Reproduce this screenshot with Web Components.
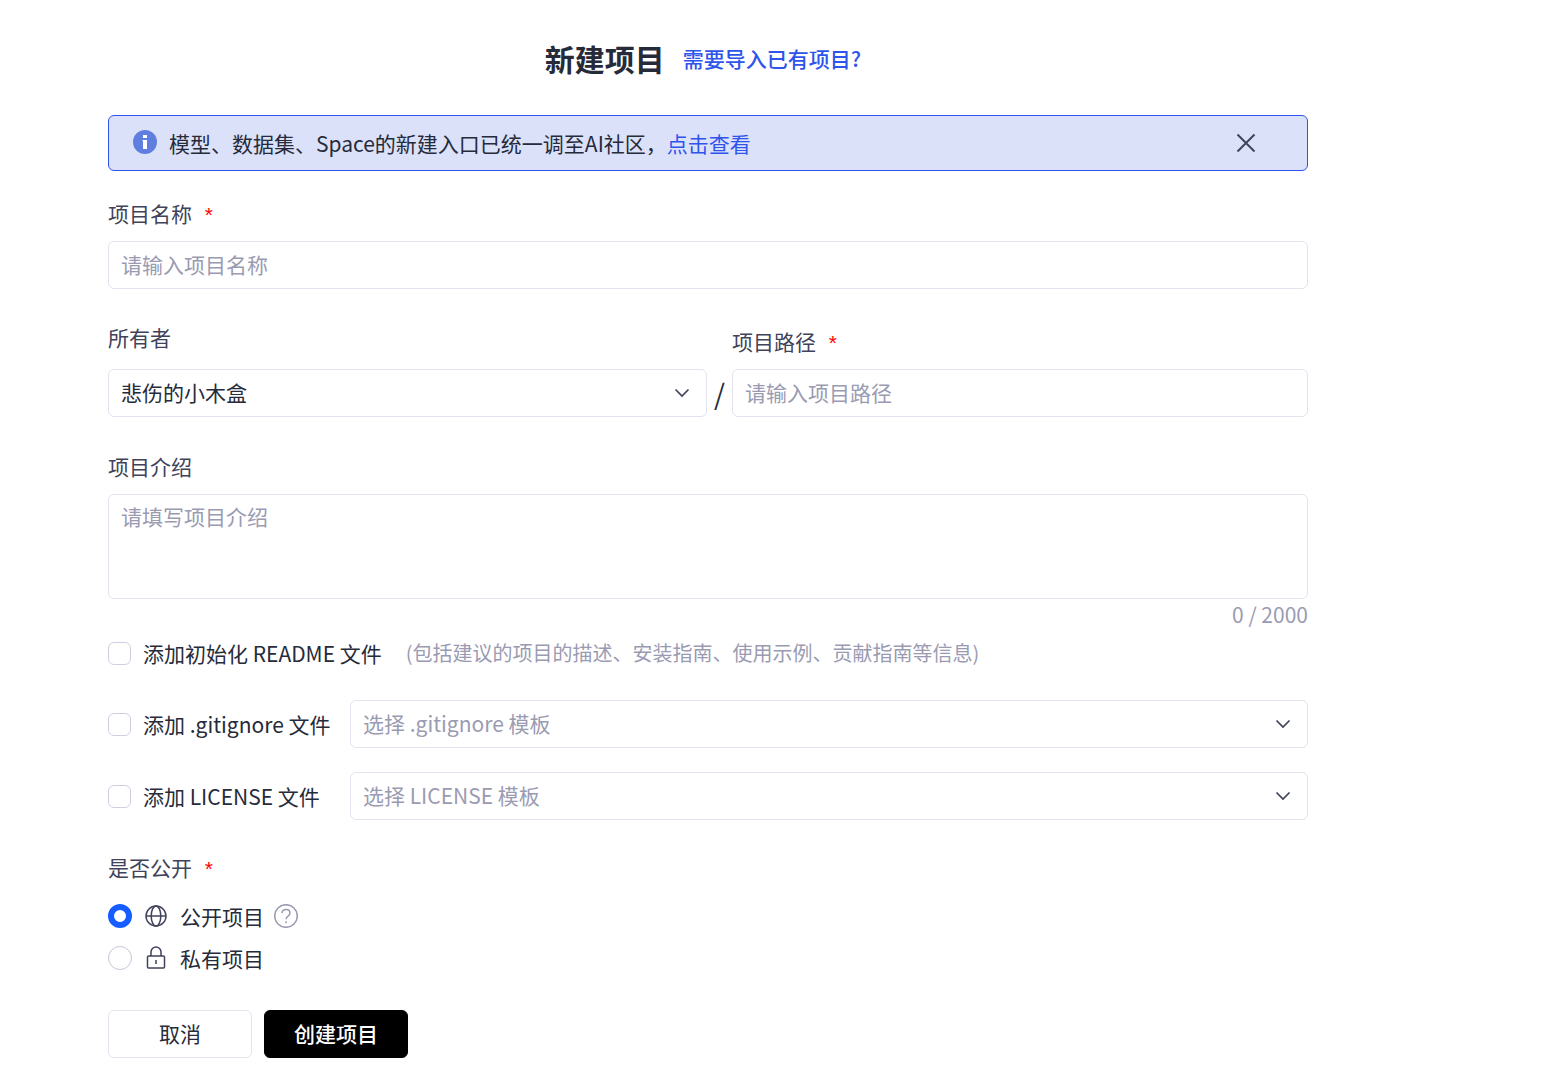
<!DOCTYPE html>
<html lang="zh-CN">
<head>
<meta charset="utf-8">
<meta name="viewport" content="width=device-width, initial-scale=1">
<title>新建项目</title>
<style>
	body {
		margin: 0;
		background: #fff;
		color: #262b3a;
		font: 21px/32px "Noto Sans CJK SC", sans-serif;
		--line: #e3e3ee;
		--label: #40435a;
		--muted: #9a9bb2;
		--link: #2f54eb;
		--dark: #40435a;
	}
</style>
</head>
<body>

<project-page>
	<page-title slot="title">新建项目<a slot="link" href="#import">需要导入已有项目?</a></page-title>
	<notice-bar slot="notice">模型、数据集、Space的新建入口已统一调至AI社区，<a href="#community">点击查看</a></notice-bar>

	<text-field placeholder="请输入项目名称" required>项目名称</text-field>
	<path-row>
		<select-field slot="owner" value="悲伤的小木盒">所有者</select-field>
		<text-field slot="path" placeholder="请输入项目路径" required>项目路径</text-field>
	</path-row>
	<text-area placeholder="请填写项目介绍" max="2000">项目介绍</text-area>

	<check-row hint="(包括建议的项目的描述、安装指南、使用示例、贡献指南等信息)">添加初始化 README 文件</check-row>
	<check-row class="first-select" options="选择 .gitignore 模板">添加 .gitignore 文件</check-row>
	<check-row class="next-select" options="选择 LICENSE 模板">添加 LICENSE 文件</check-row>

	<visibility-choice>
		是否公开
		<span slot="public">公开项目</span>
		<span slot="private">私有项目</span>
	</visibility-choice>

	<action-button slot="actions">取消</action-button>
	<action-button slot="actions" primary>创建项目</action-button>
</project-page>

<script>
////////////////////////////////////////////////////////////////
//	Shared pieces

const
ICONS = {
	info: `
		<circle cx="12" cy="12" r="12" fill="#5f7ee0"/>
		<rect x="10" y="5" width="4" height="3" fill="#fff"/>
		<path d="M9.500 10H14v9h-4v-8h-.5z" fill="#fff"/>`
,	close: `<path d="M3.500 3.500l17 17M20.500 3.500l-17 17" stroke-width="2"/>`
,	chevron: `<path d="M5.500 8.500l6.500 6.500 6.500-6.500" stroke-width="1.700"/>`
,	globe: `
		<circle cx="12" cy="12" r="10"/>
		<ellipse cx="12" cy="12" rx="4.800" ry="10"/>
		<path d="M2 12h20"/>`
,	lock: `
		<rect x="3.500" y="10" width="17" height="12" rx="1"/>
		<path d="M7 10V6a5 5 0 0 1 10 0v4M12 14v4"/>`
,	help: `
		<circle cx="12" cy="12" r="11.300"/>
		<path d="M8 9.300c0-2.300 1.700-3.900 4-3.900s4 1.500 4 3.500c0 1.500-.8 2.300-2 3.200-1.300.9-1.900 1.600-1.900 3.200"/>
		<path d="M12.100 17.200v2"/>`
}

const
BOX = `
	input, textarea, select {
		box-sizing: border-box;
		width: 100%;
		margin: 0;
		padding: 0 12px 2px;
		border: 1px solid var(--line);
		border-radius: 6px;
		background: #fff;
		color: inherit;
		font: inherit;
		outline: none;
	}
	input, select { height: 48px }
	input::placeholder, textarea::placeholder { color: var(--muted); opacity: 1 }
	input:focus, textarea:focus, select:focus { border-color: var(--link) }
`

const
LABEL = `
	label, .label { color: var(--label); line-height: 30px }
	.star {
		margin-left: 8px;
		color: #f00;
		font-family: "Liberation Sans", sans-serif;
		line-height: 1;
	}
`

const
SELECT = `
	.select { display: grid; align-items: center }
	.select > * { grid-area: 1 / 1 }
	.select select { appearance: none; padding-right: 48px }
	.select ui-icon {
		justify-self: end;
		margin-right: 13px;
		color: var(--dark);
		pointer-events: none;
	}
`

class
Base extends HTMLElement {
	constructor() {
		super()
		this.attachShadow( { mode: 'open' } )
	}
	connectedCallback() {
		this.shadowRoot.innerHTML = this.Render()
		this.Ready()
	}
	Ready() {}
	get Star() {
		return this.hasAttribute( 'required' ) ? '<span class="star" aria-hidden="true">*</span>' : ''
	}
	Attr( name ) {
		return this.getAttribute( name ) ?? ''
	}
}

customElements.define( 'ui-icon', class extends Base {
	Render() {
		return `
			<style>
				:host { display: block; flex: none; width: 24px; height: 24px }
				svg { display: block; width: 100%; height: 100% }
			</style>
			<svg viewBox="0 0 24 24" fill="none" stroke="none" aria-hidden="true">
				<g ${ this.Attr( 'name' ) === 'info' ? '' : 'stroke="currentColor" stroke-width="1.500"' }>
					${ ICONS[ this.Attr( 'name' ) ] }
				</g>
			</svg>
		`
	}
} )

////////////////////////////////////////////////////////////////
//	Header

customElements.define( 'page-title', class extends Base {
	Render() {
		return `
			<style>
				:host { display: flex; justify-content: center; align-items: center; gap: 18px; padding-right: 10px }
				h1 { margin: 0; font-size: 30px; line-height: 48px; font-weight: 700 }
				::slotted( a ) { color: var(--link); font-weight: 500; text-decoration: none }
			</style>
			<h1><slot></slot></h1>
			<slot name="link"></slot>
		`
	}
} )

customElements.define( 'notice-bar', class extends Base {
	Render() {
		return `
			<style>
				:host {
					display: flex;
					align-items: center;
					gap: 12px;
					box-sizing: border-box;
					min-height: 56px;
					padding: 0 49px 0 24px;
					border: 1px solid var(--link);
					border-radius: 6px;
					background: #dce1fa;
				}
				:host( [hidden] ) { display: none }
				p { flex: 1; margin: 0; padding-bottom: 1px }
				::slotted( a ) { color: var(--link); text-decoration: none }
				.info { margin-bottom: 2px }
				button { padding: 0; border: 0; background: none; color: var(--dark); cursor: pointer }
			</style>
			<ui-icon class="info" name="info"></ui-icon>
			<p><slot></slot></p>
			<button type="button" aria-label="关闭"><ui-icon name="close"></ui-icon></button>
		`
	}
	Ready() {
		this.shadowRoot.querySelector( 'button' ).onclick = () => this.hidden = true
	}
} )

////////////////////////////////////////////////////////////////
//	Fields

customElements.define( 'text-field', class extends Base {
	Render() {
		return `
			<style>
				:host { display: flex; flex-direction: column; gap: 13px }
				${ LABEL } ${ BOX }
			</style>
			<label for="control"><slot></slot> ${ this.Star }</label>
			<input id="control" type="text" placeholder="${ this.Attr( 'placeholder' ) }">
		`
	}
} )

customElements.define( 'select-field', class extends Base {
	Render() {
		return `
			<style>
				:host { display: flex; flex-direction: column; gap: 17px }
				${ LABEL } ${ BOX } ${ SELECT }
			</style>
			<label for="control"><slot></slot></label>
			<div class="select">
				<select id="control"><option>${ this.Attr( 'value' ) }</option></select>
				<ui-icon name="chevron"></ui-icon>
			</div>
		`
	}
} )

customElements.define( 'text-area', class extends Base {
	Render() {
		return `
			<style>
				:host { display: flex; flex-direction: column }
				${ LABEL } ${ BOX }
				label { margin-bottom: 13px }
				textarea { display: block; height: 105px; padding: 5px 12px; resize: none }
				output { align-self: flex-end; color: var(--muted); line-height: 30px }
			</style>
			<label for="control"><slot></slot></label>
			<textarea id="control" maxlength="${ this.Attr( 'max' ) }" placeholder="${ this.Attr( 'placeholder' ) }"></textarea>
			<output for="control">0 / ${ this.Attr( 'max' ) }</output>
		`
	}
	Ready() {
		const area = this.shadowRoot.querySelector( 'textarea' )
		const count = this.shadowRoot.querySelector( 'output' )
		area.oninput = () => count.textContent = `${ area.value.length } / ${ this.Attr( 'max' ) }`
	}
} )

customElements.define( 'path-row', class extends Base {
	Render() {
		return `
			<style>
				:host { display: flex; align-items: flex-end }
				.owner { flex: 1; min-width: 0 }
				.path { width: 48% }
				.slash { width: 25px; font-size: 28px; line-height: 48px; text-align: center }
			</style>
			<div class="owner"><slot name="owner"></slot></div>
			<span class="slash">/</span>
			<div class="path"><slot name="path"></slot></div>
		`
	}
} )

customElements.define( 'check-row', class extends Base {
	Render() {
		const hint = this.Attr( 'hint' )
		const options = this.Attr( 'options' )
		return `
			<style>
				:host { display: flex; align-items: center }
				${ BOX } ${ SELECT }
				.check { display: flex; align-items: center; gap: 12px }
				.check.fixed { width: 242px }
				input {
					appearance: none;
					flex: none;
					width: 23px;
					height: 23px;
					padding: 0;
					border-color: #d0cfe2;
				}
				input:checked { border-color: #165dff; background: #165dff }
				.hint { margin-left: 24px; color: var(--muted); font-size: 20px }
				.select { flex: 1 }
				select { color: var(--muted) }
			</style>
			<label class="check ${ options && 'fixed' }"><input type="checkbox"><span><slot></slot></span></label>
			${ hint && `<span class="hint">${ hint }</span>` }
			${ options && `
				<div class="select">
					<select aria-label="${ options }"><option>${ options }</option></select>
					<ui-icon name="chevron"></ui-icon>
				</div>` }
		`
	}
} )

customElements.define( 'visibility-choice', class extends Base {
	Render() {
		return `
			<style>
				:host { display: block }
				${ LABEL }
				.label { margin-bottom: 18px }
				.choices { display: flex; flex-direction: column; gap: 10px }
				.choice { display: flex; align-items: center; gap: 10px }
				.choice label { display: flex; align-items: center; gap: 12px; color: #262b3a; line-height: 32px }
				.choice label ui-icon { color: var(--dark) }
				input {
					appearance: none;
					box-sizing: border-box;
					width: 24px;
					height: 24px;
					margin: 0;
					border: 1px solid #c5c5d8;
					border-radius: 50%;
				}
				input:checked { border: 6px solid #165dff }
				button { padding: 0; border: 0; background: none; color: var(--muted); cursor: pointer }
			</style>
			<div role="radiogroup" aria-labelledby="caption">
				<div class="label" id="caption"><slot></slot> <span class="star" aria-hidden="true">*</span></div>
				<div class="choices">
					<div class="choice">
						<label><input type="radio" name="visibility" checked><ui-icon name="globe"></ui-icon><slot name="public"></slot></label>
						<button type="button" aria-label="帮助"><ui-icon name="help"></ui-icon></button>
					</div>
					<div class="choice">
						<label><input type="radio" name="visibility"><ui-icon name="lock"></ui-icon><slot name="private"></slot></label>
					</div>
				</div>
			</div>
		`
	}
} )

customElements.define( 'action-button', class extends Base {
	Render() {
		return `
			<style>
				:host { display: block }
				button {
					min-width: 144px;
					height: 48px;
					padding: 0 24px 2px;
					border: 1px solid var(--line);
					border-radius: 6px;
					background: #fff;
					color: inherit;
					font: inherit;
					cursor: pointer;
				}
				:host( [primary] ) button { border-color: #000; background: #000; color: #fff; font-weight: 500 }
			</style>
			<button type="button"><slot></slot></button>
		`
	}
} )

////////////////////////////////////////////////////////////////
//	Page

customElements.define( 'project-page', class extends Base {
	Render() {
		return `
			<style>
				:host { display: block; max-width: 1200px; padding: 34px 108px 27px }
				::slotted( notice-bar ) { margin: 33px 0 27px }
				::slotted( path-row ) { margin: 33px 0 34px }
				::slotted( check-row ) { margin-top: 8px }
				::slotted( .first-select ) { margin-top: 31px }
				::slotted( .next-select ) { margin-top: 24px }
				::slotted( visibility-choice ) { margin-top: 32px }
				.actions { display: flex; gap: 12px; margin-top: 36px }
			</style>
			<main>
				<slot name="title"></slot>
				<slot name="notice"></slot>
				<form>
					<slot></slot>
					<div class="actions"><slot name="actions"></slot></div>
				</form>
			</main>
		`
	}
} )
</script>
</body>
</html>
